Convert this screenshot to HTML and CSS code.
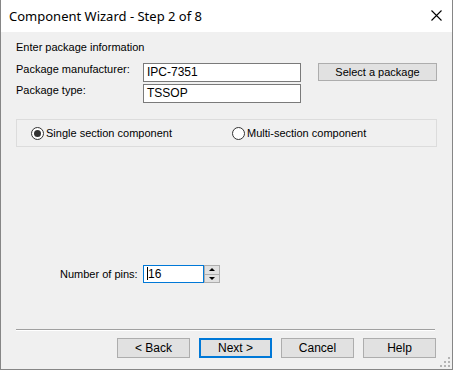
FILE: index.html
```html
<!doctype html>
<html lang="en">
<head>
	<meta charset="UTF-8">
	<title>Component Wizard - Step 2 of 8</title>
	<link rel="stylesheet" href="styles.css">
</head>
<body>
	<div class="window">
		<div class="titlebar">
			<span class="title">Component Wizard - Step 2 of 8</span>
			<svg class="close" width="11" height="11" viewBox="0 0 11 11">
				<path d="M0.5 0.5 L10.5 10.5 M10.5 0.5 L0.5 10.5" stroke="#000" stroke-width="1.1" fill="none"/>
			</svg>
		</div>

		<div class="content">
			<div class="heading">Enter package information</div>

			<div class="field-row first">
				<label class="field-label">Package manufacturer:</label>
				<div class="textbox">IPC-7351</div>
				<button class="btn select-btn">Select a package</button>
			</div>
			<div class="field-row">
				<label class="field-label">Package type:</label>
				<div class="textbox">TSSOP</div>
			</div>

			<div class="group">
				<div class="radio checked"><span class="dot"></span>Single section component</div>
				<div class="radio"><span class="dot"></span>Multi-section component</div>
			</div>

			<div class="pins-row">
				<label class="pins-label">Number of pins:</label>
				<div class="textbox pins focus"><span class="caret"></span>16</div>
				<div class="spinner">
					<div class="spin up"><span class="arrow-up"></span></div>
					<div class="spin down"><span class="arrow-down"></span></div>
				</div>
			</div>

			<div class="footer">
				<div class="separator"></div>
				<div class="buttons">
					<button class="btn">&lt; Back</button>
					<button class="btn default">Next &gt;</button>
					<button class="btn">Cancel</button>
					<button class="btn">Help</button>
				</div>
			</div>
		</div>

		<svg class="grip" width="10" height="10" viewBox="0 0 10 10">
			<g fill="#b4b4b4">
				<rect x="8" y="0" width="2" height="2"/>
				<rect x="4" y="4" width="2" height="2"/>
				<rect x="8" y="4" width="2" height="2"/>
				<rect x="0" y="8" width="2" height="2"/>
				<rect x="4" y="8" width="2" height="2"/>
				<rect x="8" y="8" width="2" height="2"/>
			</g>
		</svg>
	</div>
</body>
</html>
```

FILE: styles.css
```css
html, body {
	margin: 0;
	padding: 0;
	width: 453px;
	height: 370px;
	overflow: hidden;
}

.window {
	position: relative;
	box-sizing: border-box;
	width: 453px;
	height: 370px;
	border: 1px solid #868686;
	border-top: none;
	display: flex;
	flex-direction: column;
	font-family: "Liberation Sans", Arial, sans-serif;
	font-size: 11px;
	color: #000;
}

.titlebar {
	height: 31px;
	background: #fff;
	display: flex;
	align-items: center;
	justify-content: space-between;
	padding: 0 10px 1px 8px;
}
.title {
	font-family: "Noto Sans", "Open Sans", sans-serif;
	font-size: 13px;
	padding-top: 1px;
}
.close {
	display: block;
}

.content {
	flex: 1;
	background: #f0f0f0;
	display: flex;
	flex-direction: column;
	padding: 9px 15px 11px 15px;
}

.heading {
	line-height: 13px;
}

.field-row {
	display: flex;
	align-items: flex-start;
	margin-top: 2px;
}
.field-row.first {
	margin-top: 9px;
}
.field-label {
	width: 127px;
	line-height: 13px;
}

.textbox {
	box-sizing: border-box;
	width: 158px;
	height: 19px;
	background: #fff;
	border: 1px solid #7a7a7a;
	padding: 0 3px;
	line-height: 17px;
	font-size: 12px;
}

.btn {
	box-sizing: border-box;
	height: 20px;
	width: 73px;
	margin: 0;
	padding: 0;
	background: #e1e1e1;
	border: 1px solid #adadad;
	font-family: "Liberation Sans", Arial, sans-serif;
	font-size: 12px;
	color: #000;
}
.select-btn {
	margin-left: auto;
	width: 119px;
	height: 18px;
	font-size: 11px;
}

.group {
	margin-top: 16px;
	height: 28px;
	box-sizing: border-box;
	border: 1px solid #dcdcdc;
	display: flex;
	align-items: center;
	padding-left: 14px;
}
.radio {
	display: flex;
	align-items: center;
	width: 201px;
}
.radio .dot {
	box-sizing: border-box;
	width: 13px;
	height: 13px;
	border: 1px solid #333;
	border-radius: 50%;
	background: #fff;
	margin-right: 2px;
	display: flex;
	align-items: center;
	justify-content: center;
}
.radio.checked .dot::after {
	content: "";
	width: 7px;
	height: 7px;
	border-radius: 50%;
	background: #333;
}

.pins-row {
	display: flex;
	align-items: center;
	margin-top: 118px;
	padding-left: 44px;
}
.pins-label {
	width: 83px;
}
.textbox.pins {
	width: 61px;
	height: 18px;
	line-height: 16px;
	padding-left: 3px;
}
.textbox.focus {
	border-color: #0078d7;
}
.caret {
	display: inline-block;
	width: 1px;
	height: 13px;
	background: #000;
	vertical-align: -2px;
}
.spinner {
	width: 16px;
	height: 18px;
	display: flex;
	flex-direction: column;
}
.spin {
	flex: 1;
	box-sizing: border-box;
	background: #e1e1e1;
	border: 1px solid #adadad;
	display: flex;
	align-items: center;
	justify-content: center;
}
.spin.down {
	border-top: none;
}
.arrow-up {
	border-left: 3px solid transparent;
	border-right: 3px solid transparent;
	border-bottom: 3px solid #000;
}
.arrow-down {
	border-left: 3px solid transparent;
	border-right: 3px solid transparent;
	border-top: 3px solid #000;
}

.footer {
	margin-top: auto;
}
.separator {
	border-top: 1px solid #a0a0a0;
	border-bottom: 1px solid #fff;
	margin-right: 2px;
}
.buttons {
	display: flex;
	justify-content: flex-end;
	gap: 9px;
	margin-top: 7px;
	padding-right: 1px;
}
.btn.default {
	border: 2px solid #0078d7;
}

.grip {
	position: absolute;
	right: 2px;
	bottom: 2px;
}
```
